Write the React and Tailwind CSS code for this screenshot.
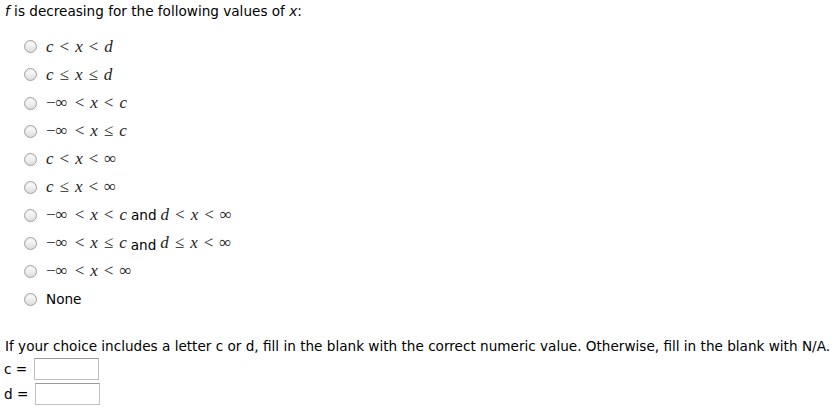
import React from "react";

const V = ({ c }) => <span className="italic">{c}</span>;
const R = ({ c }) => <span className="mx-[6px] not-italic">{c}</span>;
const NI = () => <span className="mr-[1px]">−∞</span>;

function Radio() {
  return (
    <div className="w-[13px] h-[13px] rounded-full border border-[#a0a0a0] bg-gradient-to-b from-white to-[#dedede] shadow-[inset_0_1px_1px_rgba(0,0,0,0.08)] shrink-0" />
  );
}

function M({ children }) {
  return (
    <span className="text-[17px] leading-[18px] text-[#222] font-['Liberation_Serif'] whitespace-nowrap">
      {children}
    </span>
  );
}

const And = () => (
  <span className="mx-[4px] text-[13.6px] font-['DejaVu_Sans']">and</span>
);

const options = [
  <M><V c="c" /><R c="<" /><V c="x" /><R c="<" /><V c="d" /></M>,
  <M><V c="c" /><R c="≤" /><V c="x" /><R c="≤" /><V c="d" /></M>,
  <M><NI /><R c="<" /><V c="x" /><R c="<" /><V c="c" /></M>,
  <M><NI /><R c="<" /><V c="x" /><R c="≤" /><V c="c" /></M>,
  <M><V c="c" /><R c="<" /><V c="x" /><R c="<" />∞</M>,
  <M><V c="c" /><R c="≤" /><V c="x" /><R c="<" />∞</M>,
  <span className="flex items-center"><M><NI /><R c="<" /><V c="x" /><R c="<" /><V c="c" /></M><And /><M><V c="d" /><R c="<" /><V c="x" /><R c="<" />∞</M></span>,
  <span className="flex items-center"><M><NI /><R c="<" /><V c="x" /><R c="≤" /><V c="c" /></M><span className="mt-[4px]"><And /></span><M><V c="d" /><R c="≤" /><V c="x" /><R c="<" />∞</M></span>,
  <M><NI /><R c="<" /><V c="x" /><R c="<" />∞</M>,
  <span className="text-[13.6px]">None</span>,
];

const heights = ["h-[27px]", "h-[29px]", "h-[28px]", "h-[28px]", "h-[28px]", "h-[28px]", "h-[28px]", "h-[28px]", "h-[28px]", "h-[28px]"];

export default function App() {
  return (
    <div className="w-[839px] h-[408px] bg-white text-black text-[13.6px] leading-[16px] overflow-hidden font-['DejaVu_Sans']">
      <div className="pl-[5px] pt-[3px]">
        <span className="italic">f</span> is decreasing for the following values of <span className="italic">x</span>:
      </div>
      <div className="mt-[14px] pl-[24px] flex flex-col">
        {options.map((o, i) => (
          <div key={i} className={"flex items-center gap-[9px] " + heights[i]}>
            <Radio />
            {o}
          </div>
        ))}
      </div>
      <div className="pl-[5px] mt-[25px] whitespace-nowrap">
        If your choice includes a letter c or d, fill in the blank with the correct numeric value. Otherwise, fill in the blank with N/A.
      </div>
      <div className="pl-[4px] mt-[4px] flex items-center h-[22px]">
        <span className="w-[30px] shrink-0 whitespace-nowrap">c =</span>
        <div className="w-[65px] h-[22px] border border-[#c0c0c0] border-t-[#9a9a9a]" />
      </div>
      <div className="pl-[4px] mt-[3px] flex items-center h-[22px]">
        <span className="w-[31px] shrink-0 whitespace-nowrap">d =</span>
        <div className="w-[65px] h-[22px] border border-[#c0c0c0] border-t-[#9a9a9a]" />
      </div>
    </div>
  );
}
